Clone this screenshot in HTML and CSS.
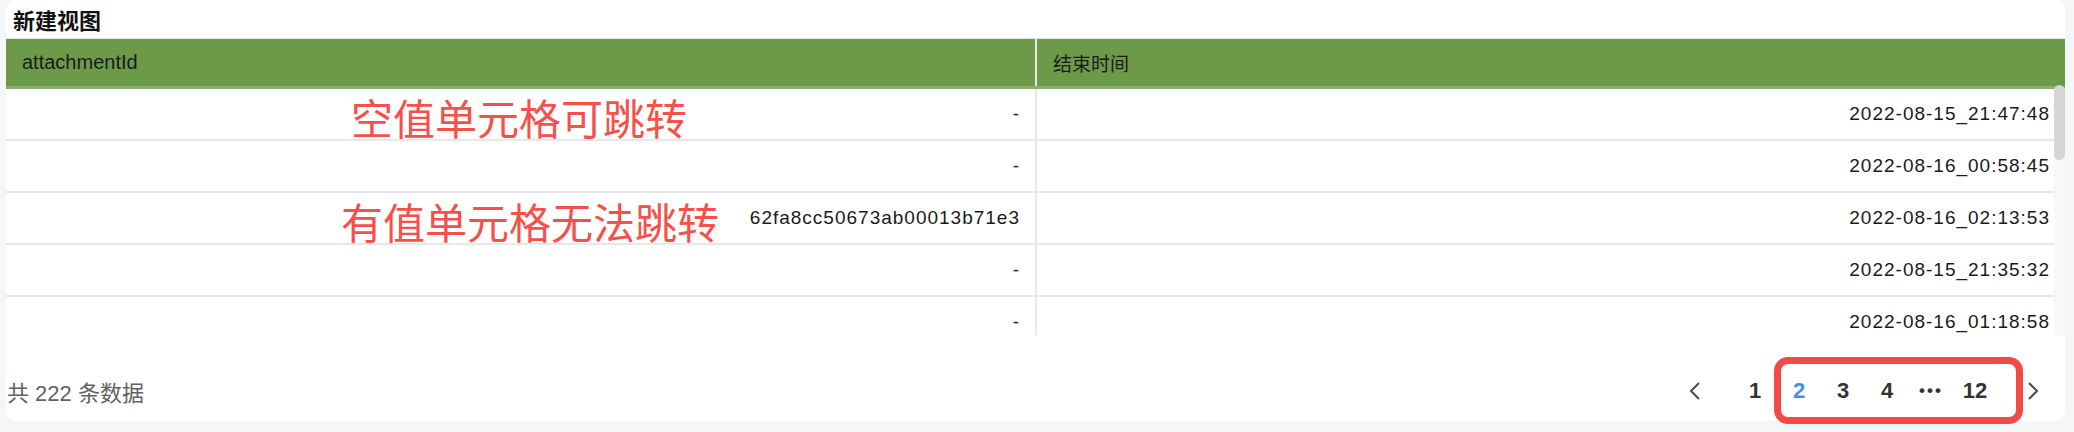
FILE: index.html
```html
<!DOCTYPE html>
<html lang="zh">
<head>
<meta charset="utf-8">
<title>新建视图</title>
<link rel="stylesheet" href="styles.css">
</head>
<body>
<div class="card">
  <div class="title">新建视图</div>
  <div class="table">
    <div class="thead">
      <div class="th th-first">attachmentId</div>
      <div class="th">结束时间</div>
    </div>
    <div class="tbody">
      <div class="row"><div class="td td-first">-</div><div class="td">2022-08-15_21:47:48</div></div>
      <div class="row"><div class="td td-first">-</div><div class="td">2022-08-16_00:58:45</div></div>
      <div class="row"><div class="td td-first">62fa8cc50673ab00013b71e3</div><div class="td">2022-08-16_02:13:53</div></div>
      <div class="row"><div class="td td-first">-</div><div class="td">2022-08-15_21:35:32</div></div>
      <div class="row"><div class="td td-first">-</div><div class="td">2022-08-16_01:18:58</div></div>
    </div>
  </div>
  <div class="footer">
    <div class="total">共 222 条数据</div>
    <div class="pager">
      <span class="pg pg-prev"><svg width="12" height="20" viewBox="0 0 12 20"><polyline points="10,2 2,10 10,18" fill="none" stroke="#4a4a4a" stroke-width="2"/></svg></span>
      <span class="pg">1</span>
      <span class="pg pg-active">2</span>
      <span class="pg">3</span>
      <span class="pg">4</span>
      <span class="pg pg-more">•••</span>
      <span class="pg">12</span>
      <span class="pg pg-next"><svg width="12" height="20" viewBox="0 0 12 20"><polyline points="2,2 10,10 2,18" fill="none" stroke="#4a4a4a" stroke-width="2"/></svg></span>
    </div>
  </div>
  <div class="scroll-track"></div>
  <div class="scroll-thumb"></div>
  <div class="note note-1">空值单元格可跳转</div>
  <div class="note note-2">有值单元格无法跳转</div>
  <div class="mark-box"></div>
</div>
</body>
</html>
```
FILE: styles.css
```css
html, body {
  margin: 0;
  padding: 0;
}
body {
  background: #f5f6f8;
  font-family: "Liberation Sans", "Noto Sans CJK SC", sans-serif;
  color: #1f1f1f;
  width: 2074px;
  height: 432px;
  overflow: hidden;
}
.card {
  position: relative;
  margin: 0 9px 0 6px;
  height: 421px;
  background: #ffffff;
  border-radius: 10px;
}
.title {
  height: 38px;
  line-height: 38px;
  padding-left: 7px;
  font-size: 22px;
  font-weight: bold;
  color: #111111;
  font-family: "Noto Sans CJK SC", sans-serif;
}
.table {
  border-top: 1px solid #e4e4e4;
}
.thead {
  display: grid;
  grid-template-columns: 1031px 1fr;
  height: 47px;
  background: #6c9a49;
  border-bottom: 3px solid #8cad74;
}
.th {
  display: flex;
  align-items: center;
  padding-left: 16px;
  font-size: 19px;
  color: #1a1a1a;
}
.th-first {
  padding-left: 16px;
  font-size: 20px;
  border-right: 2px solid #e6e9e3;
}
.tbody {
  height: 246px;
  overflow: hidden;
}
.row {
  display: grid;
  grid-template-columns: 1031px 1fr;
  height: 50px;
  border-bottom: 2px solid #e8e8e8;
}
.td {
  display: flex;
  align-items: center;
  justify-content: flex-end;
  padding-right: 15px;
  font-size: 19px;
  letter-spacing: 1px;
  color: #1a1a1a;
}
.td-first {
  border-right: 2px solid #e8e8e8;
}
.footer {
  box-sizing: border-box;
  height: 85px;
  padding: 26px 10px 0 1px;
  display: flex;
  align-items: center;
  justify-content: space-between;
}
.total {
  font-size: 22px;
  color: #626262;
}
.pager {
  display: flex;
  align-items: center;
}
.pg {
  width: 44px;
  height: 40px;
  display: flex;
  align-items: center;
  justify-content: center;
  font-size: 22px;
  font-weight: bold;
  color: #333333;
}
.pg-prev {
  margin-right: 16px;
}
.pg-next {
  margin-left: 14px;
}
.pg-active {
  color: #3d8ff5;
}
.pg-more {
  font-size: 17px;
  letter-spacing: 2px;
}
.scroll-track {
  position: absolute;
  left: 2048px;
  top: 90px;
  width: 11px;
  height: 246px;
  background: #f8f8f8;
}
.scroll-thumb {
  position: absolute;
  left: 2048px;
  top: 85px;
  width: 11px;
  height: 75px;
  background: #d6d6d6;
  border-radius: 6px;
}
.note {
  position: absolute;
  font-family: "Noto Sans CJK SC", sans-serif;
  font-size: 42px;
  line-height: 42px;
  color: #f5504b;
  white-space: nowrap;
}
.note-1 {
  left: 345px;
  top: 96px;
}
.note-2 {
  left: 335px;
  top: 200px;
}
.mark-box {
  position: absolute;
  left: 1768px;
  top: 357px;
  width: 249px;
  height: 67px;
  box-sizing: border-box;
  border: 7px solid #f44a47;
  border-radius: 14px;
}
```
